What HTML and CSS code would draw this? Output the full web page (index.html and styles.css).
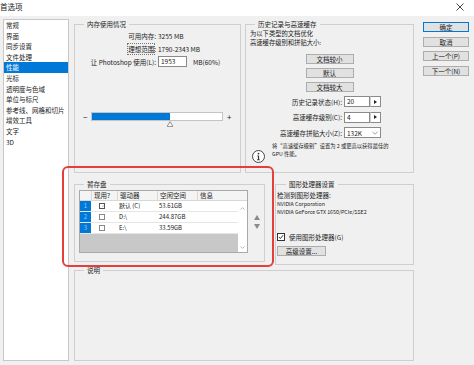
FILE: index.html
```html
<!DOCTYPE html>
<html lang="zh-CN">
<head>
  <meta charset="UTF-8">
  <meta name="viewport" content="width=device-width, initial-scale=1.0">
  <title>首选项</title>
  <link rel="stylesheet" href="styles.css">
</head>
<body>
  <div class="window">
    <!-- Title bar -->
    <div class="titlebar">
      <span class="title">首选项</span>
      <svg class="close" width="8" height="8" viewBox="0 0 8 8"><path d="M0.5 0.5 L7.5 7.5 M7.5 0.5 L0.5 7.5" stroke="#333" stroke-width="0.9" fill="none"/></svg>
    </div>

    <div class="dialog">
      <!-- Category list -->
      <ul class="nav">
        <li>常规</li>
        <li>界面</li>
        <li>同步设置</li>
        <li>文件处理</li>
        <li class="active">性能</li>
        <li>光标</li>
        <li>透明度与色域</li>
        <li>单位与标尺</li>
        <li>参考线、网格和切片</li>
        <li>增效工具</li>
        <li>文字</li>
        <li>3D</li>
      </ul>

      <div class="content">
        <div class="row top-row">
          <!-- Memory -->
          <div class="group memory">
            <div class="group-title">内存使用情况</div>
            <div class="mem-grid">
              <span class="label">可用内存:</span>
              <span>3255 MB</span>
              <span class="label"><span class="dotted">理想范围</span>:</span>
              <span>1790-2343 MB</span>
              <span class="label">让 Photoshop 使用(L):</span>
              <span class="mem-value"><span class="input mem-input">1953</span>MB(60%)</span>
            </div>
            <div class="slider">
              <span class="minus">−</span>
              <div class="track">
                <div class="fill" style="width: 60%"></div>
                <svg class="thumb" width="7" height="6" viewBox="0 0 7 6"><path d="M3.5 0.6 L6.4 5.4 L0.6 5.4 Z" fill="#fff" stroke="#777" stroke-width="0.8"/></svg>
              </div>
              <span class="plus">+</span>
            </div>
          </div>

          <!-- History & cache -->
          <div class="group history">
            <div class="group-title">历史记录与高速缓存</div>
            <p class="hint">为以下类型的文档优化<br>高速缓存级别和拼贴大小:</p>
            <div class="preset-buttons">
              <button class="btn preset">文档较小</button>
              <button class="btn preset">默认</button>
              <button class="btn preset">文档较大</button>
            </div>
            <div class="form-grid">
              <span class="label">历史记录状态(H):</span>
              <span class="spin"><span class="input spin-input">20</span><span class="spin-btn"><svg width="3" height="4" viewBox="0 0 3 4"><path d="M0 0 L3 2 L0 4 Z" fill="#222"/></svg></span></span>
              <span class="label">高速缓存级别(C):</span>
              <span class="spin"><span class="input spin-input">4</span><span class="spin-btn"><svg width="3" height="4" viewBox="0 0 3 4"><path d="M0 0 L3 2 L0 4 Z" fill="#222"/></svg></span></span>
              <span class="label">高速缓存拼贴大小(Z):</span>
              <span class="select">132K<svg width="6" height="4" viewBox="0 0 6 4"><path d="M0.5 0.8 L3 3.2 L5.5 0.8" fill="none" stroke="#888" stroke-width="0.8"/></svg></span>
            </div>
            <div class="note">
              <svg class="info" width="13" height="13" viewBox="0 0 13 13">
                <circle cx="6.5" cy="6.5" r="6" fill="#fff" stroke="#333" stroke-width="0.9"/>
                <circle cx="6.5" cy="3.6" r="0.9" fill="#333"/>
                <path d="M5.3 5.4 H7.1 V9.4 H8 V10.2 H5 V9.4 H5.9 V6.2 H5.3 Z" fill="#333"/>
              </svg>
              <p>将“高速缓存级别”设置为 2 或更高以获得最佳的<br>GPU 性能。</p>
            </div>
          </div>
        </div>

        <div class="row mid-row">
          <!-- Scratch disks -->
          <div class="group scratch">
            <div class="group-title">暂存盘</div>
            <div class="scratch-body">
              <div class="table">
                <div class="thead">
                  <span></span>
                  <span>现用?</span>
                  <span>驱动器</span>
                  <span>空闲空间</span>
                  <span>信息</span>
                </div>
                <div class="tbody">
                  <div class="rows">
                    <div class="tr">
                      <span class="idx">1</span>
                      <span class="check-cell"><span class="checkbox small checked"><svg width="6" height="6" viewBox="0 0 6 6"><path d="M0.8 3 L2.4 4.6 L5.3 1" fill="none" stroke="#111" stroke-width="1"/></svg></span></span>
                      <span>默认 (C)</span>
                      <span>53.61GB</span>
                      <span></span>
                    </div>
                    <div class="tr">
                      <span class="idx">2</span>
                      <span class="check-cell"><span class="checkbox small"></span></span>
                      <span>D:\</span>
                      <span>244.87GB</span>
                      <span></span>
                    </div>
                    <div class="tr">
                      <span class="idx">3</span>
                      <span class="check-cell"><span class="checkbox small"></span></span>
                      <span>E:\</span>
                      <span>33.59GB</span>
                      <span></span>
                    </div>
                    <div class="filler"></div>
                  </div>
                  <div class="scrollbar">
                    <svg width="5" height="3" viewBox="0 0 5 3"><path d="M0.5 2.6 L2.5 0.6 L4.5 2.6" fill="none" stroke="#999" stroke-width="0.7"/></svg>
                    <svg width="5" height="3" viewBox="0 0 5 3"><path d="M0.5 0.4 L2.5 2.4 L4.5 0.4" fill="none" stroke="#999" stroke-width="0.7"/></svg>
                  </div>
                </div>
              </div>
              <div class="order">
                <svg width="6" height="5" viewBox="0 0 6 5"><path d="M3 0 L6 5 L0 5 Z" fill="#8a8a8a"/></svg>
                <svg width="6" height="5" viewBox="0 0 6 5"><path d="M0 0 L6 0 L3 5 Z" fill="#8a8a8a"/></svg>
              </div>
            </div>
          </div>

          <!-- GPU -->
          <div class="group gpu">
            <div class="group-title">图形处理器设置</div>
            <p class="gpu-detect">检测到图形处理器:</p>
            <p class="gpu-info">NVIDIA Corporation<br>NVIDIA GeForce GTX 1650/PCIe/SSE2</p>
            <label class="gpu-check">
              <span class="checkbox checked"><svg width="8" height="8" viewBox="0 0 8 8"><path d="M1.2 4 L3.2 6 L6.8 1.6" fill="none" stroke="#111" stroke-width="1.1"/></svg></span>
              使用图形处理器(G)
            </label>
            <button class="btn advanced">高级设置...</button>
          </div>
        </div>

        <!-- Description -->
        <div class="group description">
          <div class="group-title">说明</div>
        </div>
      </div>

      <!-- Dialog buttons -->
      <div class="actions">
        <button class="btn default">确定</button>
        <button class="btn">取消</button>
        <button class="btn">上一个(P)</button>
        <button class="btn">下一个(N)</button>
      </div>
    </div>

    <!-- Red highlight annotation -->
    <div class="highlight"></div>
  </div>
</body>
</html>
```

FILE: styles.css
```css
/* General Reset */
* {
  margin: 0;
  padding: 0;
  box-sizing: border-box;
}

body {
  font-family: "Noto Sans CJK SC", "Noto Sans", sans-serif;
  font-size: 6.5px;
  color: #222;
  background: #f0f0f0;
}

.window {
  position: relative;
  width: 474px;
  height: 365px;
  background: #f0f0f0;
  overflow: hidden;
}

/* Title bar */
.titlebar {
  height: 16px;
  background: #fff;
  display: flex;
  justify-content: space-between;
  align-items: flex-start;
  padding: 2px 10px 0 0;
}

.title {
  font-size: 7.5px;
  line-height: 9px;
}

.close {
  margin-top: 1px;
}

/* Body of the dialog */
.dialog {
  display: flex;
  height: 349px;
  padding: 3px 0 0 3px;
}

.nav {
  list-style: none;
  width: 66px;
  height: 342px;
  background: #fff;
  border: 1px solid #c8c8c8;
}

.nav li {
  height: 10.6px;
  line-height: 10.6px;
  padding-left: 2px;
  white-space: nowrap;
}

.nav li.active {
  background: #0078d7;
  color: #fff;
}

.content {
  width: 340px;
  margin-left: 5px;
  padding-top: 5px;
  display: flex;
  flex-direction: column;
}

.row {
  display: flex;
}

/* Group boxes */
.group {
  border: 1px solid #cfcfcf;
}

.group-title {
  width: fit-content;
  margin: -5px 0 0 9px;
  padding: 0 3px;
  line-height: 8px;
  background: #f0f0f0;
  white-space: nowrap;
}

.label {
  text-align: right;
  white-space: nowrap;
}

.input {
  display: inline-block;
  height: 11px;
  line-height: 9px;
  padding-left: 2px;
  background: #fff;
  border: 1px solid #8a8a8a;
}

.btn {
  font: inherit;
  color: inherit;
  height: 10px;
  line-height: 8px;
  background: #e1e1e1;
  border: 1px solid #adadad;
  white-space: nowrap;
}

.checkbox {
  display: inline-flex;
  align-items: center;
  justify-content: center;
  width: 8px;
  height: 8px;
  background: #fff;
  border: 1px solid #333;
}

.checkbox.small {
  width: 6px;
  height: 6px;
  border-color: #888;
}

.checkbox.small.checked {
  border-color: #555;
}

/* Top row */
.top-row {
  gap: 4px;
  height: 149px;
}

.memory {
  width: 167px;
}

.mem-grid {
  display: grid;
  grid-template-columns: 81px auto;
  grid-auto-rows: 13px;
  column-gap: 2px;
  align-items: center;
  margin-top: 1px;
}

.dotted {
  outline: 1px dotted #777;
  outline-offset: 0;
}

.mem-value {
  display: flex;
  align-items: center;
}

.mem-input {
  width: 29px;
  margin-right: 6px;
}

.slider {
  display: flex;
  align-items: center;
  margin-top: 44px;
  padding-left: 8px;
}

.minus {
  width: 8px;
  font-size: 8px;
  line-height: 9px;
}

.plus {
  margin-left: 4px;
  font-size: 8px;
  line-height: 9px;
}

.track {
  position: relative;
  width: 132px;
  height: 9px;
  background: #fff;
  border: 1px solid #c4c4c4;
}

.fill {
  height: 100%;
  background: #0078d7;
}

.thumb {
  position: absolute;
  left: 60%;
  top: 8px;
  transform: translateX(-50%);
}

.history {
  width: 169px;
}

.hint {
  margin: 1px 0 0 4px;
  font-size: 6.3px;
  line-height: 9.2px;
}

.preset-buttons {
  display: flex;
  flex-direction: column;
  align-items: center;
  gap: 4px;
  margin-top: 7px;
}

.preset {
  width: 48px;
}

.form-grid {
  display: grid;
  grid-template-columns: 96px auto;
  grid-auto-rows: 11px;
  column-gap: 2px;
  row-gap: 4.5px;
  align-items: center;
  margin-top: 4px;
}

.spin {
  display: flex;
}

.spin-input {
  width: 26px;
}

.spin-btn {
  display: flex;
  align-items: center;
  justify-content: center;
  width: 11px;
  height: 11px;
  background: #fff;
  border: 1px solid #8a8a8a;
  border-left: 1px solid #d0d0d0;
}

.select {
  display: flex;
  justify-content: space-between;
  align-items: center;
  width: 37px;
  height: 11px;
  padding: 0 2px;
  background: #fff;
  border: 1px solid #8a8a8a;
}

.note {
  display: flex;
  align-items: flex-start;
  gap: 7px;
  margin-top: 5px;
  padding-left: 6px;
}

.note p {
  font-size: 5.3px;
  line-height: 7.8px;
}

.info {
  margin-top: 7px;
  flex: none;
}

/* Middle row */
.mid-row {
  align-items: flex-start;
  gap: 10px;
  margin-top: 11px;
}

.scratch {
  width: 191px;
  height: 78px;
}

.scratch-body {
  display: flex;
  align-items: center;
  margin-top: 2px;
  padding-left: 4px;
}

.table {
  width: 169px;
  height: 63px;
  display: flex;
  flex-direction: column;
  background: #fff;
  border: 1px solid #a9a9a9;
}

.thead {
  display: grid;
  grid-template-columns: 11px 26px 40px 40px 1fr;
  height: 10px;
  line-height: 9px;
  background: #f4f4f4;
  border-bottom: 1px solid #d8d8d8;
}

.thead span {
  padding-left: 2px;
  border-left: 1px solid #d8d8d8;
}

.thead span:first-child {
  border-left: none;
}

.tbody {
  flex: 1;
  display: flex;
}

.rows {
  flex: 1;
  display: flex;
  flex-direction: column;
}

.tr {
  display: grid;
  grid-template-columns: 11px 26px 40px 40px 1fr;
  height: 11px;
  line-height: 10px;
  font-size: 6px;
  border-bottom: 1px solid #e6e6e6;
}

.tr span {
  padding-left: 2px;
}

.tr .idx {
  padding-left: 0;
  text-align: center;
  background: #0078d7;
  color: #9fcbf3;
}

.tr .check-cell {
  display: flex;
  align-items: center;
  padding-left: 8px;
}

.filler {
  flex: 1;
  background: #c8c8c8;
}

.scrollbar {
  width: 9px;
  display: flex;
  flex-direction: column;
  justify-content: space-between;
  align-items: center;
  padding: 6px 0 3px;
  background: #fff;
}

.order {
  display: flex;
  flex-direction: column;
  gap: 4px;
  margin-left: 6px;
}

.gpu {
  width: 139px;
  height: 81px;
  padding-left: 1px;
}

.gpu-detect {
  margin-top: 3px;
  line-height: 8px;
}

.gpu-info {
  margin-top: 2px;
  font-size: 5.3px;
  line-height: 7.8px;
}

.gpu-check {
  display: flex;
  align-items: center;
  gap: 4px;
  height: 10px;
  margin-top: 15px;
}

.advanced {
  width: 49px;
  margin-top: 4px;
}

/* Bottom description */
.description {
  height: 91px;
  margin-top: 5px;
}

/* Right buttons */
.actions {
  width: 46px;
  margin-left: 9px;
  padding-top: 3px;
  display: flex;
  flex-direction: column;
  gap: 4.5px;
}

.actions .btn {
  width: 46px;
}

.actions .default {
  border-color: #0078d7;
}

/* Annotation overlay */
.highlight {
  position: absolute;
  left: 62px;
  top: 166px;
  width: 212px;
  height: 101px;
  border: 2px solid #e53e3e;
  border-radius: 6px;
  pointer-events: none;
}
```
